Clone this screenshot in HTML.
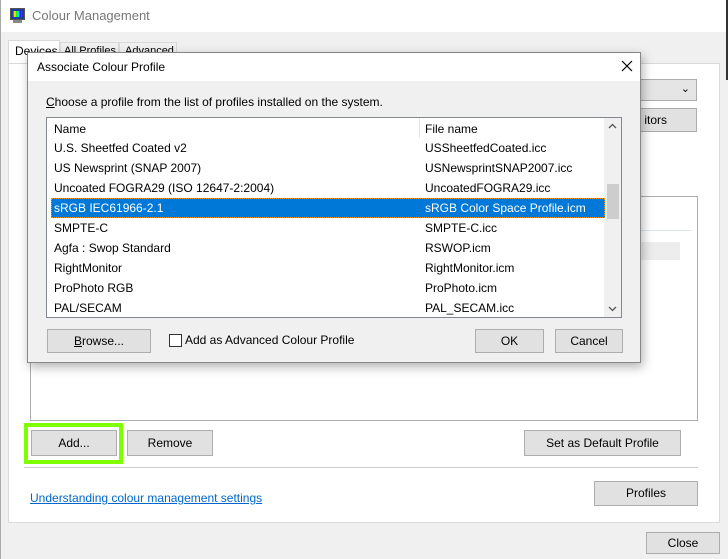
<!DOCTYPE html><html><head><style>
*{box-sizing:border-box;margin:0;padding:0}
body{width:728px;height:559px;background:#f0f0f0;font-family:"Liberation Sans",sans-serif;font-size:12px;color:#000;position:relative;overflow:hidden}
.a{position:absolute;white-space:nowrap}
.btn{position:absolute;background:#e1e1e1;border:1px solid #adadad;text-align:center;font-size:12px}
.row{position:absolute;left:0;width:558px;height:20px;line-height:20px}
.row span{position:absolute}
</style></head><body>
<div class="a" style="left:0;top:0;width:728px;height:32px;background:#fff"></div>
<div class="a" style="left:0;top:0;width:1px;height:559px;background:#aaa"></div>
<div class="a" style="left:726px;top:0;width:2px;height:80px;background:#333"></div>
<div class="a" style="left:10px;top:8px;width:15px;height:12px;background:#1a3fa0;border:1px solid #555"><div style="margin:2px;width:9px;height:6px;background:linear-gradient(90deg,red,#ff0,#0f0,#0ff,#00f,#f0f)"></div></div>
<div class="a" style="left:13px;top:20px;width:9px;height:3px;background:#888"></div>
<div class="a" style="left:32px;top:8px;font-size:13px;color:#777">Colour Management</div>
<div class="a" style="left:8px;top:40px;width:52px;height:24px;background:#fff;border:1px solid #d9d9d9;border-bottom:none;padding:3px 6px">Devices</div>
<div class="a" style="left:60px;top:42px;width:59px;height:20px;border:1px solid #d9d9d9;padding:2px 3px;font-size:11px;overflow:hidden">All Profiles</div>
<div class="a" style="left:119px;top:42px;width:58px;height:20px;border:1px solid #d9d9d9;padding:2px 5px;font-size:11px;overflow:hidden">Advanced</div>
<div class="a" style="left:8px;top:63px;width:712px;height:460px;background:#fff;border:1px solid #d9d9d9"></div>
<div class="a" style="left:640px;top:79px;width:57px;height:22px;background:#e5e5e5;border:1px solid #adadad;text-align:right;padding:2px 6px;font-size:11px">⌄</div>
<div class="btn" style="left:640px;top:108px;width:57px;height:24px;line-height:22px;text-align:left;padding-left:0">&nbsp;itors</div>
<div class="a" style="left:30px;top:196px;width:668px;height:225px;border:1px solid #adadad;background:#fff"></div>
<div class="a" style="left:640px;top:230px;width:51px;height:1px;background:#dde6f4"></div>
<div class="a" style="left:640px;top:242px;width:40px;height:18px;background:#ededed"></div>
<div class="a" style="left:24px;top:423px;width:99px;height:41px;border:4px solid #7fff00"></div>
<div class="btn" style="left:31px;top:430px;width:86px;height:26px;line-height:24px">Add...</div>
<div class="btn" style="left:127px;top:430px;width:86px;height:26px;line-height:24px">Remove</div>
<div class="btn" style="left:524px;top:430px;width:157px;height:26px;line-height:24px">Set as Default Profile</div>
<div class="a" style="left:24px;top:467px;width:674px;height:1px;background:#ccc"></div>
<div class="btn" style="left:594px;top:481px;width:104px;height:25px;line-height:23px">Profiles</div>
<div class="a" style="left:30px;top:491px;color:#0066cc;text-decoration:underline">Understanding colour management settings</div>
<div class="btn" style="left:646px;top:532px;width:74px;height:22px;line-height:20px">Close</div>

<div class="a" style="left:27px;top:52px;width:614px;height:311px;background:#f0f0f0;border:1px solid #888;box-shadow:2px 4px 10px rgba(0,0,0,.3)">
 <div class="a" style="left:0;top:0;width:612px;height:28px;background:#fff"></div>
 <div class="a" style="left:9px;top:7px;font-size:12px">Associate Colour Profile</div>
 <svg class="a" style="left:593px;top:7px" width="12" height="12"><path d="M1 1L11 11M11 1L1 11" stroke="#000" stroke-width="1.2"/></svg>
 <div class="a" style="left:18px;top:42px"><u>C</u>hoose a profile from the list of profiles installed on the system.</div>
 <div class="a" style="left:18px;top:64px;width:576px;height:201px;background:#fff;border:1px solid #828790">
  <div class="a" style="left:7px;top:4px">Name</div>
  <div class="a" style="left:372px;top:0;width:1px;height:20px;background:#e5e5e5"></div>
  <div class="a" style="left:378px;top:4px">File name</div>
  <div class="a" style="left:557px;top:0;width:17px;height:199px;background:#f0f0f0"></div>
  <svg class="a" style="left:561px;top:5px" width="9" height="6"><path d="M1 5L4.5 1.5L8 5" stroke="#555" fill="none" stroke-width="1.3"/></svg>
  <div class="a" style="left:560px;top:66px;width:12px;height:35px;background:#cdcdcd"></div>
  <svg class="a" style="left:561px;top:188px" width="9" height="6"><path d="M1 1L4.5 4.5L8 1" stroke="#555" fill="none" stroke-width="1.3"/></svg>
  <div style="position:absolute;left:0;top:20px;width:558px">
   <div class="row" style="top:0"><span style="left:7px">U.S. Sheetfed Coated v2</span><span style="left:378px">USSheetfedCoated.icc</span></div>
   <div class="row" style="top:20px"><span style="left:7px">US Newsprint (SNAP 2007)</span><span style="left:378px">USNewsprintSNAP2007.icc</span></div>
   <div class="row" style="top:40px"><span style="left:7px">Uncoated FOGRA29 (ISO 12647-2:2004)</span><span style="left:378px">UncoatedFOGRA29.icc</span></div>
   <div class="row" style="top:60px;background:#0078d7;color:#fff;outline:1px dotted #f90;outline-offset:-1px;left:4px;width:554px"><span style="left:3px">sRGB IEC61966-2.1</span><span style="left:374px">sRGB Color Space Profile.icm</span></div>
   <div class="row" style="top:80px"><span style="left:7px">SMPTE-C</span><span style="left:378px">SMPTE-C.icc</span></div>
   <div class="row" style="top:100px"><span style="left:7px">Agfa : Swop Standard</span><span style="left:378px">RSWOP.icm</span></div>
   <div class="row" style="top:120px"><span style="left:7px">RightMonitor</span><span style="left:378px">RightMonitor.icm</span></div>
   <div class="row" style="top:140px"><span style="left:7px">ProPhoto RGB</span><span style="left:378px">ProPhoto.icm</span></div>
   <div class="row" style="top:160px"><span style="left:7px">PAL/SECAM</span><span style="left:378px">PAL_SECAM.icc</span></div>
  </div>
 </div>
 <div class="btn" style="left:19px;top:276px;width:104px;height:24px;line-height:22px"><u>B</u>rowse...</div>
 <div class="a" style="left:141px;top:281px;width:13px;height:13px;border:1px solid #333;background:#fff"></div>
 <div class="a" style="left:157px;top:280px">Add as Advanced Colour Profile</div>
 <div class="btn" style="left:447px;top:276px;width:69px;height:24px;line-height:22px">OK</div>
 <div class="btn" style="left:527px;top:276px;width:68px;height:24px;line-height:22px">Cancel</div>
</div>
</body></html>
